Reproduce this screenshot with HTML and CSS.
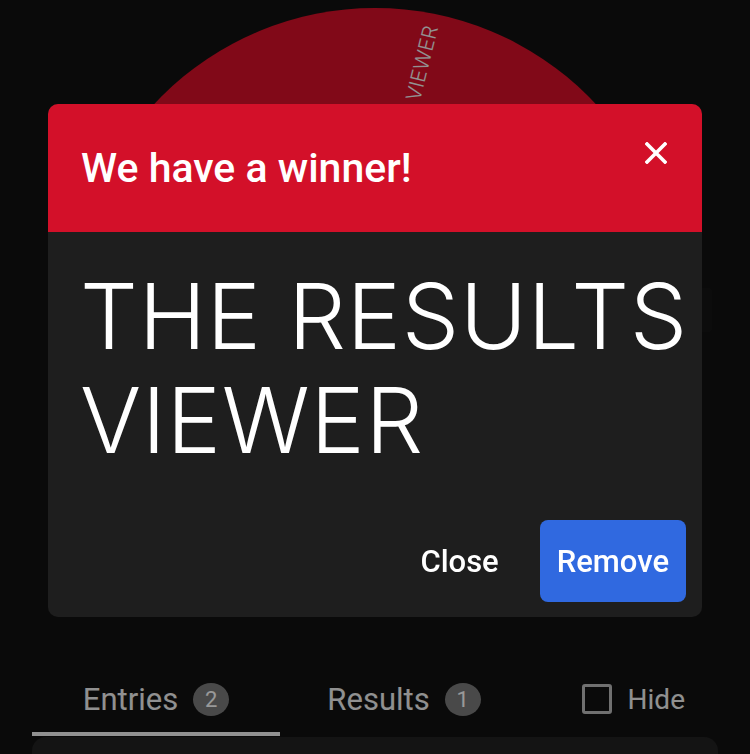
FILE: index.html
```html
<!DOCTYPE html>
<html lang="en">
<head>
    <meta charset="UTF-8">
    <meta name="viewport" content="width=device-width, initial-scale=1.0">
    <title>Wheel - We have a winner</title>
    <link rel="stylesheet" href="styles.css">
</head>
<body>
    <div class="page">
        <div class="wheel_area">
            <svg class="wheel" width="604" height="604" viewBox="0 0 604 604">
                <circle cx="302" cy="302" r="302" fill="#d81028"/>
                <path d="M302 302 L593.7 380.2 A302 302 0 0 1 10.3 223.8 Z" fill="#a90c1f"/>
                <text class="wheel_label" x="591" y="295" text-anchor="end" transform="rotate(-76 302 302)">THE RESULTS VIEWER</text>
            </svg>
            <span class="pointer"></span>
        </div>
        <div class="tabs">
            <div class="tab active">Entries <span class="badge">2</span></div>
            <div class="tab">Results <span class="badge">1</span></div>
            <label class="hide"><span class="box"></span>Hide</label>
        </div>
        <div class="panel"></div>
    </div>

    <div class="backdrop"></div>

    <div class="dialog">
        <div class="dialog_head">
            <h2>We have a winner!</h2>
            <button class="x_btn" aria-label="close">
                <svg width="22" height="22" viewBox="0 0 22 22">
                    <path d="M2 2 L20 20 M20 2 L2 20" stroke="#fff" stroke-width="3.6" stroke-linecap="square"/>
                </svg>
            </button>
        </div>
        <div class="dialog_body">
            <p class="winner">THE RESULTS VIEWER</p>
        </div>
        <div class="dialog_foot">
            <button class="btn">Close</button>
            <button class="btn primary">Remove</button>
        </div>
    </div>
</body>
</html>
```

FILE: styles.css
```css
body, div, p, h2 { margin: 0; padding: 0; }
body { background: #121212; font-family: Roboto, "Liberation Sans", sans-serif; overflow: hidden; }
button { font-family: inherit; border: 0; background: none; cursor: pointer; padding: 0; }

.page { width: 750px; height: 754px; overflow: hidden; }

/* wheel */
.wheel_area { height: 660px; padding-top: 8px; box-sizing: border-box; display: flex; justify-content: center; position: relative; }
.wheel { display: block; }
.wheel_label { font-family: Inter, "DejaVu Sans", sans-serif; font-weight: 300; font-size: 20.5px; fill: #f4f4f4; }
.pointer { position: absolute; right: 38px; top: 288px; width: 12px; height: 44px; border-radius: 4px; background: #151515; }

/* tabs */
.tabs { margin: 0 32px; height: 76px; display: grid; grid-template-columns: 248px 248px 1fr; }
.tab { display: flex; align-items: center; justify-content: center; gap: 15px; font-size: 31px; color: #f0f0f0; border-bottom: 4px solid transparent; padding-top: 6px; }
.tab.active { border-bottom-color: #f2f2f2; }
.badge { width: 36px; height: 33px; border-radius: 50%; background: #7b7b7b; color: #fff; font-size: 22px; display: flex; align-items: center; justify-content: center; }
.hide { display: flex; align-items: center; justify-content: flex-end; gap: 16px; padding-right: 33px; padding-top: 2px; font-size: 28px; color: #f0f0f0; }
.box { width: 24px; height: 24px; border: 3px solid #bbb; border-radius: 3px; }
.panel { margin: 1px 32px 0; height: 17px; border-radius: 14px 14px 0 0; background: #222; }

/* modal */
.backdrop { position: fixed; left: 0; top: 0; right: 0; bottom: 0; background: rgba(0, 0, 0, 0.4); }
.dialog { position: fixed; left: 48px; right: 48px; top: 104px; height: 513px; background: #1e1e1e; border-radius: 10px; overflow: hidden; display: flex; flex-direction: column; }
.dialog_head { flex-shrink: 0; height: 128px; background: #d31029; display: flex; align-items: center; justify-content: space-between; padding: 0 35px 0 33px; }
.dialog_head h2 { font-size: 41px; font-weight: 500; color: #fff; }
.x_btn { align-self: flex-start; margin-top: 38px; width: 22px; height: 22px; }
.x_btn svg { display: block; }
.dialog_body { padding: 32px 0 0 32px; }
.winner { font-family: Inter, "DejaVu Sans", sans-serif; font-weight: 300; font-size: 91px; line-height: 104px; letter-spacing: 0.8px; color: #fff; }
.dialog_foot { margin-top: auto; display: flex; justify-content: flex-end; gap: 24px; padding: 0 16px 15px; }
.btn { height: 82px; padding: 0 17px; border-radius: 8px; font-size: 31px; font-weight: 500; color: #fff; }
.btn.primary { background: #3069e0; }
```
